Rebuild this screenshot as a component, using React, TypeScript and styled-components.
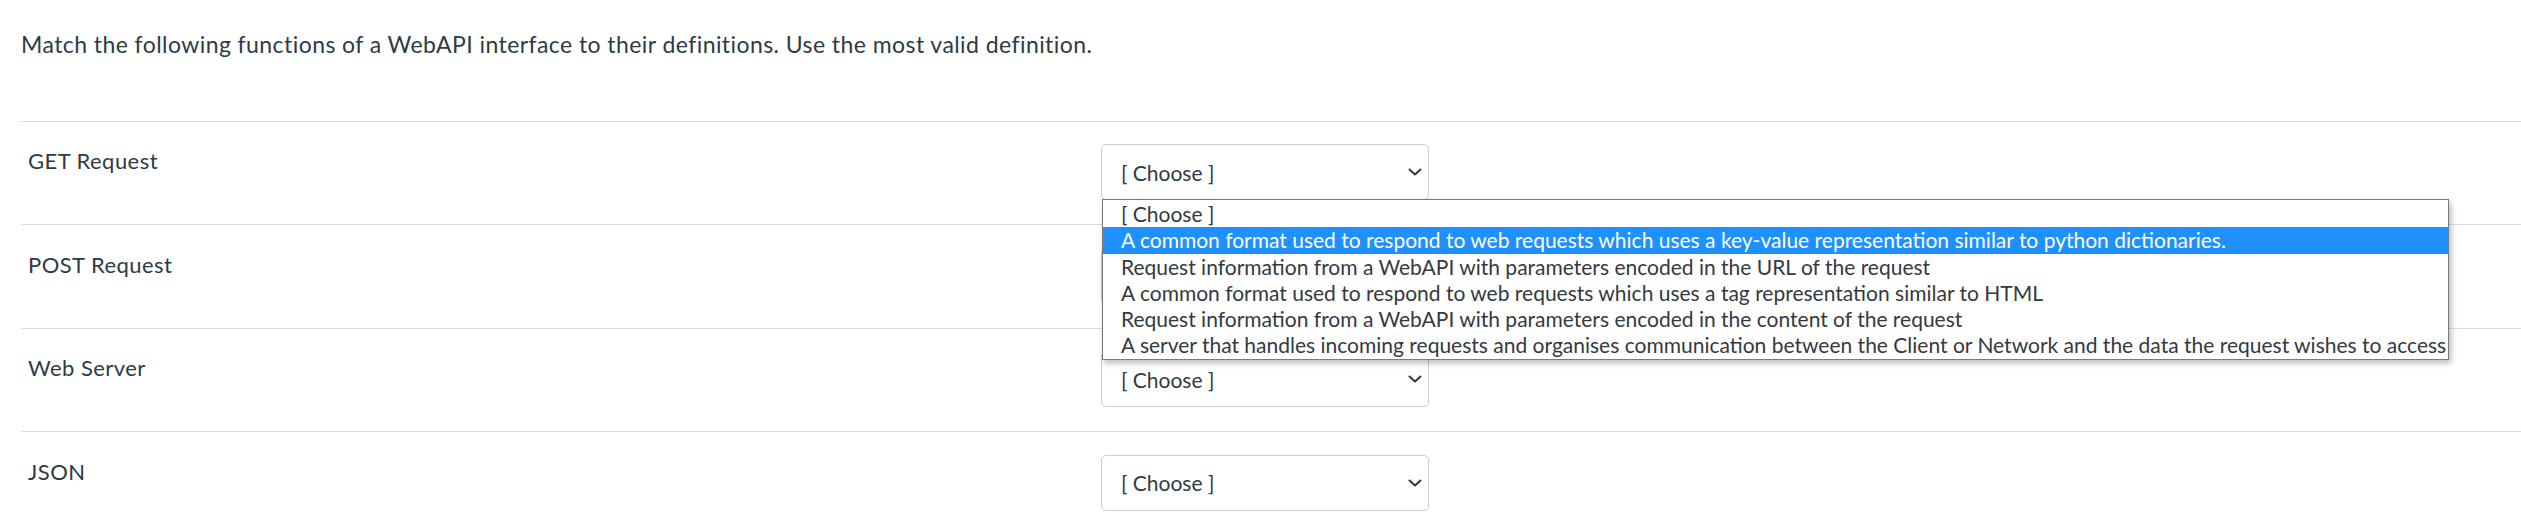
import React from "react";
import styled, { createGlobalStyle } from "styled-components";

const GlobalStyle = createGlobalStyle`
  body {
    margin: 0;
    background: #ffffff;
    font-family: Lato, "Liberation Sans", sans-serif;
    color: #2d3b45;
  }
`;

const questions = ["GET Request", "POST Request", "Web Server", "JSON"];

const options = [
  "[ Choose ]",
  "A common format used to respond to web requests which uses a key-value representation similar to python dictionaries.",
  "Request information from a WebAPI with parameters encoded in the URL of the request",
  "A common format used to respond to web requests which uses a tag representation similar to HTML",
  "Request information from a WebAPI with parameters encoded in the content of the request",
  "A server that handles incoming requests and organises communication between the Client or Network and the data the request wishes to access",
];

const Chevron = () => (
  <svg width="14" height="8" viewBox="0 0 14 8" fill="none">
    <path
      d="M1.5 1.5 L7 6.5 L12.5 1.5"
      stroke="#2d3b45"
      strokeWidth="2"
      strokeLinecap="round"
      strokeLinejoin="round"
    />
  </svg>
);

export default function App() {
  return (
    <>
      <GlobalStyle />
      <Page>
        <Question>
          Match the following functions of a WebAPI interface to their
          definitions. Use the most valid definition.
        </Question>
        <Answers>
          {questions.map((q, i) => (
            <Row key={q}>
              <Label>{q}</Label>
              <SelectWrap>
                <SelectBox>
                  <span>[ Choose ]</span>
                  <Chevron />
                </SelectBox>
                {i === 0 && (
                  <OptionList>
                    {options.map((o, j) => (
                      <Option key={o} $selected={j === 1}>
                        {o}
                      </Option>
                    ))}
                  </OptionList>
                )}
              </SelectWrap>
            </Row>
          ))}
        </Answers>
      </Page>
    </>
  );
}

const Page = styled.div`
  padding-left: 21px;
`;

const Question = styled.p`
  margin: 0;
  padding-top: 29px;
  font-size: 23px;
  letter-spacing: 0.43px;
  line-height: 31.5px;
  white-space: nowrap;
`;

const Answers = styled.div`
  margin-top: 60px;
`;

const Row = styled.div`
  display: grid;
  grid-template-columns: 1073px 328px;
  align-items: start;
  border-top: 1px solid #dadcde;
  padding: 22.5px 0 24px 7px;
`;

const Label = styled.div`
  font-size: 22px;
  letter-spacing: 0.45px;
  line-height: 31.5px;
  padding-top: 1px;
`;

const SelectWrap = styled.div`
  position: relative;
`;

const SelectBox = styled.div`
  box-sizing: border-box;
  height: 56px;
  width: 328px;
  display: flex;
  align-items: center;
  justify-content: space-between;
  padding: 0 6px 0 19px;
  border: 1px solid #c7cdd1;
  border-radius: 5px;
  background: #ffffff;
  font-size: 21px;
  color: #2d3b45;
`;

const OptionList = styled.div`
  position: absolute;
  top: 55px;
  left: 1px;
  z-index: 2;
  width: 1347px;
  box-sizing: border-box;
  border: 1px solid #7a7a7a;
  background: #ffffff;
  box-shadow: 2px 3px 6px rgba(0, 0, 0, 0.28);
  padding: 1px 0 0;
`;

const Option = styled.div<{ $selected: boolean }>`
  height: 26.3px;
  line-height: 26.3px;
  padding-left: 18px;
  font-size: 21px;
  white-space: nowrap;
  color: ${({ $selected }) => ($selected ? "#ffffff" : "#333a40")};
  background: ${({ $selected }) => ($selected ? "#1e90ff" : "transparent")};
`;
